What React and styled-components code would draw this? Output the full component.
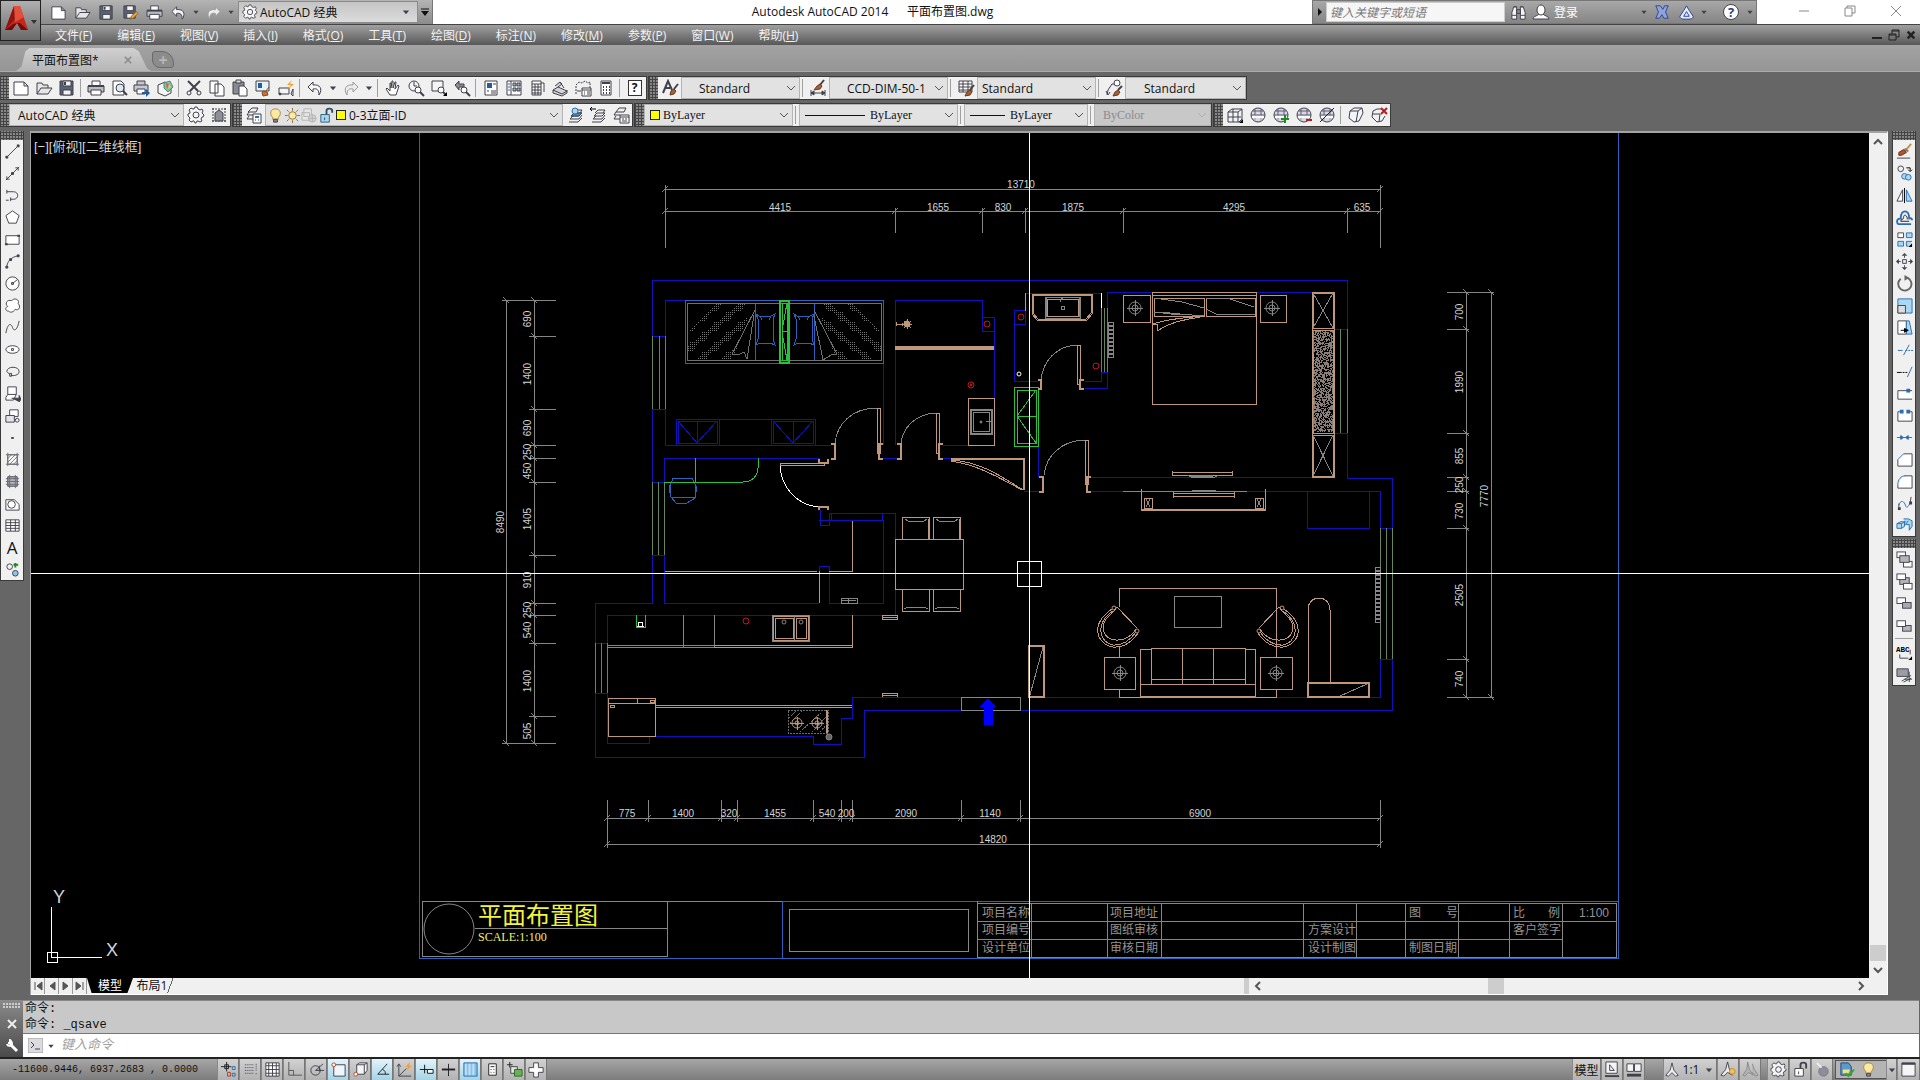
import React from 'react';
import styled, { createGlobalStyle, css } from 'styled-components';

const GlobalStyle = createGlobalStyle`
    * { box-sizing: border-box; }
    body {
        margin: 0;
        background: #666666;
        font-family: "Open Sans", "Noto Sans CJK SC", sans-serif;
        font-size: 12px;
        color: #111;
    }
    button, select, input {
        font: inherit;
        color: inherit;
        margin: 0;
        padding: 0;
        border: 0;
        border-radius: 0;
        background: none;
        outline: none;
    }
    h1 { margin: 0; font-size: 12px; font-weight: 400; }
`;

/* ---------- icons ---------- */

const Glyph = styled.svg`
    display: block;
    flex: none;
    fill: none;
    stroke: #41414b;
    stroke-width: 1;
`;

const BLUE = '#2a6db0';
const SKY = '#a9d8f2';

const boxes = (a, b, fillA, fillB) => (
    <>
        <rect x={a[0]} y={a[1]} width="9" height="6" fill={fillA} />
        <rect x={b[0]} y={b[1]} width="9" height="6" fill={fillB} />
    </>
);

const globe = (
    <>
        <circle cx="9" cy="9" r="7" fill="#d8d8e0" />
        <path d="M2 9h14M4 5h10M6 3v6M12 3v6" stroke="#5c5c78" />
        <path d="M3 10h12v2H3z" fill="#fff" stroke="none" />
        <path d="M6 12v3M12 12v3" stroke="#9a9aac" />
    </>
);

const sheets = (
    <path d="M5 10l3-3h8l-3 3zM4 13l3-3M4 13h9l3-4M3 16h9l4-4M6 7l3-3h7l-2 3" fill="none" />
);

const icons = {
    page: <path d="M2 3h10l4 4v9H2zM12 3v4h4" fill="#fff" />,
    open: <path d="M2 15V4h5l1 2h5v3M2 15l4-6h11l-4 6z" fill="#e6e6e6" />,
    save: (
        <>
            <path d="M2 2h13v14H2z" fill="#5a6274" />
            <path d="M5 2h8v5H5zM5 11h8v5H5z" fill="#f2f2f2" />
            <path d="M6 3h2v3H6z" fill="#41414b" stroke="none" />
        </>
    ),
    saveAs: (
        <>
            <path d="M2 2h12v13H2z" fill="#5a6274" />
            <path d="M5 2h7v5H5zM5 10h7v5H5z" fill="#f2f2f2" />
            <path d="M9 16l1-3 5-5 2 2-5 5z" fill="#e9a83a" stroke="#8a5c1c" />
        </>
    ),
    print: (
        <>
            <path d="M5 7V2h8v5" fill="#fff" />
            <path d="M1 7h16v6H1z" fill="#b8bcc4" />
            <path d="M4 11h10v5H4z" fill="#fff" />
            <path d="M1 7h16" strokeWidth="2" />
        </>
    ),
    preview: (
        <>
            <path d="M3 2h8l3 3v11H3z" fill="#fff" />
            <circle cx="10" cy="9" r="4" fill="#dfe9f4" />
            <path d="M13 12l4 4" strokeWidth="2" />
        </>
    ),
    publish: (
        <>
            <path d="M4 6V2h8v4M1 6h14v6H1z" fill="#c5c8d0" />
            <path d="M4 10h8v5H4z" fill="#fff" />
            <path d="M9 13h4v-3l4 4-4 4v-3H9z" fill="#1f5da0" stroke="none" />
        </>
    ),
    cube: (
        <>
            <path d="M2 6l7-3 6 3v8l-6 3-7-3z" fill="#f4f4f4" />
            <path d="M8 4l6-2 3 6-5 5-4-4z" fill="#7cc4a8" stroke="#4a8a80" />
            <path d="M10 4l3 1-2 5z" fill="#e05a3a" stroke="none" />
            <path d="M13 5l2 3-3 2z" fill="#f0c648" stroke="none" />
        </>
    ),
    cut: (
        <>
            <path d="M3 2l10 10M15 2L5 12" strokeWidth="2" />
            <circle cx="4" cy="14" r="2" />
            <circle cx="14" cy="14" r="2" />
        </>
    ),
    copy: <path d="M2 2h8v12H2zM7 5h6l3 3v9H7z" fill="#fff" />,
    paste: (
        <>
            <path d="M2 3h11v12H2z" fill="#8a8a92" />
            <path d="M8 7h5l3 3v7H8z" fill="#fff" />
            <path d="M5 1h5v3H5z" fill="#ddd" />
        </>
    ),
    match: (
        <>
            <path d="M2 2h13v10H2z" fill="#e8f0f8" />
            <path d="M4 4h4v5H4z" fill="#1f5da0" stroke="none" />
            <path d="M15 8l-3 4M9 12l4 1 1 3-5 1-1-3z" fill="#c8733a" stroke="#8a4a1c" />
        </>
    ),
    blockEdit: (
        <>
            <path d="M2 9h10v6H2z" fill="#f4f4f4" />
            <path d="M15 1l-5 5h4l-4 5 7-6h-4z" fill="#f0a030" stroke="none" />
            <path d="M14 15l2-5v7z" fill="#fff" />
            <circle cx="3" cy="15" r="1" fill="#41414b" />
        </>
    ),
    undo: <path d="M7 3L2 8l5 5v-3c4-1 6 1 6 6 4-6 1-11-6-10z" fill="#f7f7f7" />,
    redo: <path d="M11 3l5 5-5 5v-3c-4-1-6 1-6 6-4-6-1-11 6-10z" fill="#ececec" stroke="#9a9a9a" />,
    pan: <path d="M6 16L2 10l1-1 3 3V4h1v5l1-7h1v7l2-6h1l-1 7 3-4 1 1-3 9z" fill="#fff" />,
    zoomRt: (
        <>
            <circle cx="7" cy="7" r="5" fill="#f4f4f4" />
            <path d="M7 3v4h3" stroke="#41414b" />
            <circle cx="11" cy="11" r="3" fill="#fff" />
            <path d="M13 13l4 4" strokeWidth="2" />
        </>
    ),
    zoomWin: (
        <>
            <path d="M2 2h11v10H2z" fill="#f4f4f4" />
            <circle cx="11" cy="11" r="3" fill="#fff" />
            <path d="M13 13l3 3" strokeWidth="2" />
            <path d="M17 13v4h-4z" fill="#000" stroke="none" />
        </>
    ),
    zoomPrev: (
        <>
            <path d="M2 6l4-4v3h5v3H6v3z" fill="#8a8a92" />
            <circle cx="11" cy="11" r="3" fill="#fff" />
            <path d="M13 13l4 4" strokeWidth="2" />
        </>
    ),
    props: (
        <>
            <path d="M3 2h12v14H3z" fill="#fff" />
            <path d="M5 4h5v5H5z" fill="#1f5da0" stroke="none" />
            <path d="M11 5h3M5 12h2M9 12h5M9 14h5" />
        </>
    ),
    design: (
        <>
            <path d="M2 2h14v14H2zM6 2v14" fill="#fff" />
            <path d="M8 4h3v3H8zM12 4h3v3h-3zM8 9h3v3H8zM12 9h3v3h-3z" fill="#9fb4cc" />
            <path d="M3 5h2M3 8h2M3 11h2" stroke={BLUE} />
        </>
    ),
    palettes: <path d="M4 2h9v14H4zM4 5h9M7 5v11M10 5v11M4 8h9M4 11h9M4 14h9M13 4h3v9" fill="#fff" />,
    sheetSet: <path d="M2 11l9 4 5-3-9-4zM2 11v3l9 3 5-3v-3M4 7l5-4 2 2-4 3M9 3l4 6" fill="#d4d4da" />,
    markup: (
        <>
            <path d="M2 15V6l3-3 3 1 3-2 3 2 2-1v6" strokeDasharray="2 1" />
            <path d="M8 9h9v8H8zM8 11h9" fill="#fff" />
            <path d="M10 13h1M13 13h3M10 15h1M13 15h3M3 12h4" />
        </>
    ),
    calc: (
        <>
            <path d="M4 2h10v14H4z" fill="#fff" />
            <path d="M5 4h8" strokeWidth="2" />
            <path d="M6 8h1M9 8h1M12 8h1M6 11h1M9 11h1M12 11h1M6 14h1M9 14h1M12 14h1" strokeWidth="2" />
        </>
    ),
    textStyle: (
        <>
            <path d="M2 14L7 2l4 9M4 9h5" strokeWidth="2" />
            <path d="M17 5l-4 5" strokeWidth="2" />
            <path d="M9 16l1-4 3-2 2 2-2 3z" fill="#a8603a" stroke="#6a3a1c" />
        </>
    ),
    dimStyle: (
        <>
            <path d="M2 11v6M16 11v6M2 14h14M2 14l3-2v4zM16 14l-3-2v4z" fill="#41414b" />
            <path d="M15 1l-4 5" strokeWidth="2" />
            <path d="M5 11l3-4 3-2 2 2-2 3z" fill="#a8603a" stroke="#6a3a1c" />
        </>
    ),
    tableStyle: (
        <>
            <path d="M2 2h13v11H2zM2 5h13M2 8h13M2 11h13M6 2v11M11 2v11" fill="#fff" />
            <path d="M17 6l-4 5" strokeWidth="2" />
            <path d="M8 17l2-4 3-2 2 2-2 3z" fill="#a8603a" stroke="#6a3a1c" />
        </>
    ),
    leaderStyle: (
        <>
            <path d="M2 16l1-5 4-6h3" />
            <path d="M1 12l2 4 2-3" />
            <circle cx="12" cy="4" r="3" fill="#fff" />
            <path d="M17 7l-4 4" strokeWidth="2" />
            <path d="M8 17l2-4 3-2 2 2-2 3z" fill="#a8603a" stroke="#6a3a1c" />
        </>
    ),
    gear: (
        <>
            <path d="M8 1h2l1 2 2 1 2-1 1 2-1 2 1 1 1 1-1 2-1 0-1 2 1 2-2 1-2-1-1 0-1 2H8l-1-2-1 0-2 1-2-2 1-2-1-1-1-1V8l2-1 0-1-1-2 2-2 2 1 1 0z" fill="#f4f4f4" />
            <circle cx="9" cy="9" r="3" />
        </>
    ),
    workspace: (
        <>
            <path d="M2 3h14M2 15h14M3 2v14M15 2v14" strokeDasharray="2 1" />
            <path d="M5 7l4-3 4 3v8H5z" fill="#8e8e96" />
        </>
    ),
    layerMgr: (
        <>
            <path d="M3 6l4-4h6l-2 4zM2 9h6M2 9l2-3M2 13h6M2 13l2-3" />
            <path d="M8 8h8v9H8z" fill="#fff" />
            <path d="M10 10h4v2h-4z" fill={BLUE} stroke="none" />
            <path d="M10 14h1M13 14h1" />
        </>
    ),
    layerCurrent: (
        <>
            {sheets}
            <path d="M5 10l3-3h8l-3 3z" fill="#3f8fd0" />
            <circle cx="9" cy="5" r="3" fill={SKY} stroke={BLUE} />
        </>
    ),
    layerPrev: <>{sheets}<path d="M1 3h6M1 3l2-2M1 3l2 2" stroke="#000" /></>,
    layerState: (
        <>
            <path d="M4 6l3-4h7l-2 4zM2 9h6M2 9l2-3M2 13h6M2 13l2-3" />
            <path d="M8 9h9v8H8zM8 11h9M10 13h2M13 13h2M10 15h5" fill="#fff" />
        </>
    ),
    bulb: (
        <>
            <path d="M6 11c-4-4-2-9 3-9s7 5 3 9v2H6z" fill="#ffe9a0" stroke="#a08a4a" />
            <path d="M7 13h4v3H7z" fill="#8a8a8a" />
        </>
    ),
    sun: (
        <>
            <circle cx="9" cy="9" r="4" fill="#ffe9a8" stroke="#8a7434" />
            <path d="M9 1v3M9 14v3M1 9h3M14 9h3M3 3l2 2M15 3l-2 2M3 15l2-2M15 15l-2-2" stroke="#8a7434" />
        </>
    ),
    freeze: (
        <g stroke="#b4b4b4">
            <path d="M3 2h8v8H3zM1 6h8v8H1z" fill="#e6e6e6" />
            <circle cx="12" cy="12" r="4" fill="#d2d2d2" />
            <path d="M12 8v8M8 12h8" />
        </g>
    ),
    unlock: (
        <>
            <path d="M9 8V4c0-3 6-3 6 0v2" strokeWidth="2" stroke="#2d4f66" />
            <path d="M3 8h9v8H3z" fill={SKY} stroke="#2d5f7c" />
            <path d="M7 11v3" />
        </>
    ),
    viewport: (
        <>
            <path d="M2 6l4-3h10v10l-3 3H2zM2 6h10v10M12 6l4-3M7 3v13M2 11h13" fill="#f2f2f6" />
            <path d="M17 13v4h-4z" fill="#000" stroke="none" />
        </>
    ),
    globe,
    globeAdd: <>{globe}<path d="M13 9v8M9 13h8" stroke="#1c8a1c" strokeWidth="2" /></>,
    globeSub: <>{globe}<path d="M11 14h6" stroke="#b02020" strokeWidth="2" /></>,
    globeOff: <>{globe}<path d="M2 16L16 2" stroke="#222" /></>,
    solid: <path d="M3 5l4-3h8l1 5-4 8-5 1-5-4zM3 5h8l4-3M11 5l-2 11" fill="#f2f6fa" />,
    solidOff: (
        <>
            <path d="M3 5l4-2h4M3 5l-1 6 5 5 5-1 3-5M3 8h7l-1 8" fill="#f2f6fa" />
            <path d="M11 2l6 6M17 2l-6 6" stroke="#b02020" strokeWidth="2" />
        </>
    ),

    line: <><path d="M3 15L15 3" /><path d="M2 14h2v2H2zM14 2h2v2h-2z" fill="#41414b" /></>,
    xline: <><path d="M2 16L16 2M3 12v3h3M12 3h3v3" /><path d="M8 8h2v2H8z" fill="#41414b" /></>,
    pline: <path d="M3 5h7c6 0 6 8 0 8H7M3 3v4M7 11v4M2 14h3" />,
    polygon: <path d="M9 2l7 5-3 8H5L2 7z" fill="#fff" />,
    rect: <><path d="M2 5h14v9H2z" fill="#fff" /><path d="M1 13h3v2H1zM14 4h3v2h-3z" fill="#41414b" stroke="none" /></>,
    arc: <><path d="M3 15c0-6 5-11 12-12" /><path d="M2 14h2v2H2zM14 2h2v2h-2zM6 6h2v2H6z" fill="#41414b" /></>,
    circle: <><circle cx="9" cy="9" r="7" fill="#fff" /><path d="M9 9l5-4M8 8h2v2H8z" /></>,
    cloud: <path d="M5 15c-4 0-4-4-1-5-4-3 0-8 4-6 3-4 9-1 7 3 3 3 1 8-3 6-2 3-5 4-7 2z" fill="#fff" />,
    spline: <path d="M2 15c2-12 6-10 7-6s5 4 7-7" />,
    ellipse: <><ellipse cx="9" cy="9" rx="7" ry="4" fill="#fff" /><path d="M8 8h2v2H8z" /></>,
    ellipseArc: <path d="M3 9c0-6 13-6 13 0 0 4-6 5-9 4M3 9l3 3M6 11h2v3H6z" />,
    insert: <><path d="M4 2h9v8H4zM4 10l-2 3v3h8l3-6" fill="#fff" /><path d="M8 14h8v-3l2 4-2 3" fill="#41414b" /></>,
    makeBlock: <><path d="M6 3h9v7H6z" fill="#fff" /><path d="M2 9h9v7H2z" fill="#e4e4ea" /><circle cx="14" cy="14" r="2" /></>,
    point: <path d="M8 9h2v1H8z" fill="#41414b" />,
    hatch: <path d="M4 4h10v10H4zM4 8l4-4M4 12l8-8M6 14l8-8M10 14l4-4M2 4h14M2 14h14M4 2v14M14 2v14" stroke="#6a6a74" fill="#fff" />,
    gradient: <><path d="M4 4h10v10H4z" fill="#b4b4bc" /><path d="M2 6h14M2 9h14M2 12h14M6 2v14M12 2v14" stroke="#6a6a74" /></>,
    region: <><path d="M2 5h9l5 5v6H2z" fill="#fff" /><circle cx="8" cy="10" r="4" /></>,
    table: <path d="M2 3h14v12H2zM2 6h14M2 9h14M2 12h14M7 3v12M12 3v12" fill="#fff" />,
    addSel: <><circle cx="6" cy="6" r="3" /><path d="M12 2v5M10 4h5" stroke="#1c8a1c" strokeWidth="2" /><circle cx="12" cy="13" r="3" fill="#8fc4ea" /></>,

    erase: <><path d="M16 1l-6 7" stroke="#c89040" strokeWidth="2" /><path d="M9 6l4 3" stroke="#777" strokeWidth="2" /><path d="M3 10l5-3 3 3-5 3H3z" fill="#c0502c" stroke="#5a2a1c" /><path d="M1 16h14" /></>,
    copyObj: <><circle cx="5" cy="4" r="3" /><path d="M11 3h4v3M13 5l2 2 2-2" stroke="#000" /><circle cx="9" cy="12" r="3" fill={SKY} stroke={BLUE} /><circle cx="13" cy="13" r="3" fill={SKY} stroke={BLUE} /></>,
    mirror: <><path d="M7 3v12H1z" fill="#fff" /><path d="M9 1v16" stroke="#000" /><path d="M11 3v12h6z" fill={SKY} stroke={BLUE} /></>,
    offset: <><path d="M2 16h14M2 16c-2-4 0-6 3-6 0-10 9-10 9 0 3-1 3 2 3 2" stroke={BLUE} strokeWidth="2" /><path d="M5 13h9M5 13c0-3 3-1 3-4 0-4 4-3 4 2" stroke="#222" /></>,
    array: <><path d="M2 2h6v5H2z" fill="#fff" /><path d="M11 2h6v5h-6zM2 11h6v5H2zM17 11h-6v5h2" fill={SKY} stroke={BLUE} /><path d="M17 13v4h-4z" fill="#000" stroke="none" /></>,
    move: <><path d="M9 3v2M9 13v2M2 9h3M13 9h3M7 7h4v4H7z" /><path d="M9 0l3 3H6zM9 18l3-3H6zM0 9l3-3v6zM18 9l-3-3v6z" fill="#41414b" stroke="none" /></>,
    rotate: <><path d="M5 4a7 7 0 1 0 7-1" stroke="#666" strokeWidth="2" /><path d="M9 0l5 3-5 3z" fill="#666" stroke="none" /></>,
    scale: <><path d="M2 2h15v15H2z" fill={SKY} stroke={BLUE} /><path d="M2 9h8v8H2z" fill="#ddd" /></>,
    stretch: <><path d="M2 2h9v14H2z" fill="#fff" /><path d="M11 2h3l3 14h-6z" fill={SKY} stroke={BLUE} /><path d="M5 12h6M9 10l4 2-4 2z" fill="#000" stroke="#000" /></>,
    trim: <><path d="M2 10h5M14 4l-6 11" stroke={BLUE} /><path d="M10 10h8" stroke={BLUE} strokeDasharray="2 1" /></>,
    extend: <><path d="M1 10h5" stroke="#000" /><path d="M7 10h5" stroke="#000" strokeDasharray="2 1" /><path d="M17 4l-5 11" stroke={BLUE} /></>,
    breakPt: <><path d="M17 6H2v9h15" fill="#fff" /><path d="M11 4h4v4h-4z" fill={BLUE} stroke="none" /></>,
    breakObj: <><path d="M4 5H2v10h15V5h-2" fill="#fff" /><path d="M4 3h4v4H4zM11 3h4v4h-4z" fill={BLUE} stroke="none" /></>,
    join: <path d="M1 9h16M5 7l3 2-3 2zM13 7l-3 2 3 2z" fill={BLUE} stroke={BLUE} />,
    chamfer: <><path d="M8 3h9v13H2V9" fill="#fff" /><path d="M2 9l6-6" stroke={BLUE} /></>,
    fillet: <><path d="M9 3h8v13H2v-4" fill="#fff" /><path d="M2 12c0-5 3-9 8-9" stroke={BLUE} /></>,
    blend: <><path d="M3 16V9M15 8l1-6" /><path d="M3 11c2-7 6-4 7 0s4 1 5-4" stroke={BLUE} /><path d="M2 13h3v3H2zM14 7h3v3h-3z" fill="#41414b" stroke="none" /></>,
    explode: <path d="M1 7l4-2h5l-4 2zM1 7v5h5V7M6 12l3-2V5M8 2h5l4 2v6l-3 4V8h-4M10 8l3-4" fill={SKY} stroke={BLUE} />,
    front: <>{boxes([1, 1], [8, 11], '#fff', '#fff')}<rect x="4" y="5" width="10" height="7" fill="#b4b4bc" /></>,
    back: <><rect x="4" y="5" width="10" height="7" fill="#b4b4bc" />{boxes([1, 1], [8, 11], '#fff', '#fff')}</>,
    above: boxes([1, 3], [7, 8], '#fff', '#a8a8b0'),
    under: boxes([7, 9], [1, 4], '#b4b4bc', '#fff'),
    annoFront: (
        <>
            <text x="0" y="8" fontSize="8" fontWeight="700" fontFamily="Liberation Mono, monospace" fill="#000" stroke="none">ABC</text>
            <path d="M4 11v4h9M15 6v5" />
            <path d="M17 13v4h-4z" fill="#000" stroke="none" />
        </>
    ),
    hatchBack: <><path d="M1 3h12v8H1z" fill="#9c9ca4" /><path d="M6 16l10-6M8 17l8-4M14 6v11M9 14h8" /></>,

    binoculars: (
        <>
            <path d="M2 9l2-6h3v13H2zM16 9l-2-6h-3v13h5z" fill="#f4f4f4" />
            <path d="M7 6h4v4H7z" fill="#888" />
            <path d="M4 3h3M11 3h3M2 12h5M11 12h5" />
        </>
    ),
    person: (
        <>
            <path d="M1 16c0-3 5-3 6-5h4c1 2 6 2 6 5z" fill="#fff" />
            <ellipse cx="9" cy="7" rx="4" ry="5" fill="#fff" />
        </>
    ),
    exchange: <path d="M2 2h5l3 4 2-4h4l-3 7 3 7h-5l-2-4-3 4H2l3-7z" fill="#8ea2e0" stroke="#27408c" />,
    a360: <path d="M9 2l3 5 4 6c0 3-3 3-7 3s-7 0-7-3l4-6zM9 8l3 5H6z" fill="#e4ebff" stroke="#27408c" />,

    infer: <><path d="M7 1v10M1 6h11M5 4h4v4H5z" stroke="#222" /><path d="M13 6h3v3h-3zM13 13h3v3h-3z" stroke={BLUE} /><path d="M8 12h3v4H8z" stroke="#b04020" /></>,
    snap: <path d="M3 4h10M3 7h10M3 10h10M3 13h10M15 3v8M15 13v2" strokeDasharray="1 1" />,
    grid: <path d="M2 2h14v14H2zM5 2v14M9 2v14M13 2v14M2 5h14M2 9h14M2 13h14" fill="#fff" />,
    ortho: <path d="M3 1v14h14M3 10h5v5" stroke="#555" />,
    polar: <><circle cx="8" cy="10" r="5" /><path d="M8 10l8-7M8 10h9M12 5v6" /></>,
    osnap: <><path d="M4 4h12v12H4z" fill="#f0f5fa" /><circle cx="4" cy="4" r="2" stroke="#c04020" fill="#fff" /></>,
    osnap3d: <><path d="M5 4l3-2h8v8l-3 4H5zM5 4h8v10M13 4l3-2" fill="#f5f5f5" /><circle cx="4" cy="14" r="2" stroke="#c04020" fill="#fff" /></>,
    otrack: <path d="M14 3L4 14h12M9 9c3 1 3 3 3 5" stroke="#222" />,
    ducs: <><path d="M3 4v12h13M3 16l8-8M1 6l2-3 2 3" /><path d="M15 1l-5 5h3l-2 4 6-5h-3z" fill="#f0a030" stroke="none" /></>,
    dyn: <><path d="M7 4v9M2 9h8" stroke="#111" /><path d="M10 9h6v4h-6z" fill="#fff" stroke="#111" /></>,
    lwt: <><path d="M9 3v13" stroke="#222" /><path d="M2 9h14" stroke="#222" strokeWidth="2" /></>,
    tpy: <><path d="M2 2h14v14H2z" fill="#8cc0e8" stroke={BLUE} /><path d="M3 6h12M3 10h12M3 14h12M4 3v12M8 3v12M12 3v12" stroke="#c2e0f6" strokeDasharray="2 2" strokeWidth="2" /></>,
    qp: (
        <>
            <path d="M5 3h8v12H5z" fill="#fff" stroke="#222" />
            <path d="M7 6h4M7 9h1M10 9h1M7 12h1M10 12h1" stroke="#222" />
        </>
    ),
    cycle: <><path d="M4 1v6M1 4h6" stroke="#222" /><path d="M5 6h7v7H5z" fill="#e4e4e4" /><path d="M9 9h8v7H9z" fill="#6cb054" stroke="#2c6a24" /></>,
    annoMon: <path d="M6 2h5v5h5v5h-5v5H6v-5H1V7h5z" fill="#fff" />,
    layoutA: <><path d="M2 1h12v12H2z" fill="#f5f5f5" /><path d="M6 4v6h5z" /><path d="M1 16h15" strokeWidth="2" /></>,
    layoutB: <><path d="M1 3h7v8H1zM9 3h7v8H9z" fill="#f5f5f5" /><path d="M1 15h15" strokeWidth="3" /></>,
    anno: <path d="M9 1l2 8 5 6-3 1-4-4-4 4-3-1 5-6z" fill="#eee" />,
    annoOn: <><path d="M8 1l2 8 3 6-5-3-4 4-3-1 5-6z" fill="#eee" /><circle cx="13" cy="11" r="3" fill="#f5c05a" stroke="#c88a20" /></>,
    annoAuto: <path d="M6 1l2 8 4 6-5-3-4 4-2-1 4-6zM11 3l2 6 4 6-3 1-3-4" fill="#b4b4b4" stroke="#8a8a8a" />,
    lock: <><path d="M9 8V4c0-3 6-3 6 0v4" strokeWidth="2" /><path d="M3 8h9v8H3z" fill="#fff" /><path d="M7 11v3" /></>,
    isolate: <><circle cx="10" cy="11" r="5" fill="#8e8e98" stroke="#77777f" /><path d="M3 2l5 5" stroke="#eee" strokeWidth="2" /></>,
    trayFile: <><path d="M2 2h8l3 4v9H2z" fill="#5a9ad0" stroke="#1c4a78" /><path d="M4 9h8l-2 4H4z" fill="#f5e070" stroke="none" /><path d="M7 13l3 3 6-7" stroke="#3fa030" strokeWidth="2" /></>,
    clean: <><path d="M2 2h14v14H2z" fill="#f5f5f5" /><path d="M2 3h14" strokeWidth="2" /></>,
    caret: <path d="M5 7h8l-4 5z" fill="#41414b" stroke="none" />,
};

function Icon({ name, size = 18 }) {
    return (
        <Glyph viewBox="0 0 18 18" width={size} height={size} aria-hidden="true">
            {icons[name]}
        </Glyph>
    );
}

/* ---------- shared parts ---------- */

const IconButton = styled.button`
    display: flex;
    align-items: center;
    justify-content: center;
    flex: none;
    width: ${({ $w = 23 }) => $w}px;
    height: 22px;
    font-size: 14px;
    font-weight: 700;
`;

const Divider = styled.span`
    flex: none;
    width: 2px;
    height: 18px;
    margin: 0 2px;
    border-left: 1px solid #a0a0a0;
    align-self: center;
`;

const Grip = styled.span`
    flex: none;
    width: 9px;
    background: radial-gradient(circle at 1px 1px, #888 1px, transparent 1px) 1px 3px / 3px 3px #444;
`;

const Toolbar = styled.div`
    display: flex;
    height: 24px;
    border: 1px solid #3a3a3a;
    border-left-width: ${({ $first }) => ($first ? 0 : 1)}px;
    background: #f0f0f0;
`;

const Combo = styled.div`
    display: flex;
    align-items: center;
    width: ${({ $w }) => $w}px;
    height: 22px;
    padding: 0 3px 0 ${({ $pad = 5 }) => $pad}px;
    gap: 3px;
    background: ${({ $off }) => ($off ? '#c8c8c8' : '#e2e2e2')};
    color: ${({ $off }) => ($off ? '#8a8a8a' : '#111')};
    border: 1px solid #b4b4b4;
    ${({ $serif }) => $serif && css`font-family: "Liberation Serif", serif;`}
`;

const Picker = styled.select`
    appearance: none;
    flex: 1;
    min-width: 0;
    height: 20px;
    opacity: 1;
`;

const Swatch = styled.span`
    width: 10px;
    height: 10px;
    background: #ffff00;
    border: 1px solid #222;
`;

const Stroke = styled.span`
    width: ${({ $w }) => $w}px;
    height: 1px;
    margin-right: 2px;
    background: #111;
`;

function Chevron({ dir = 'down', color = '#555', heavy }) {
    const paths = {
        down: 'M1 3l4 4 4-4',
        up: 'M1 7l4-4 4 4',
        left: 'M7 1L3 5l4 4',
        right: 'M3 1l4 4-4 4',
    };
    return (
        <Glyph viewBox="0 0 10 10" width="10" height="10" aria-hidden="true">
            <path d={paths[dir]} stroke={color} strokeWidth={heavy ? 2 : 1} />
        </Glyph>
    );
}

function Dropdown({ label, value, children, off, ...rest }) {
    return (
        <Combo $off={off} {...rest}>
            {children}
            <Picker aria-label={label} disabled={off} defaultValue={value}>
                <option>{value}</option>
            </Picker>
            <Chevron color={off ? '#b0b0b0' : '#555'} />
        </Combo>
    );
}

const Tools = ({ names }) =>
    names.map((name, i) => {
        if (name === '|') return <Divider key={i} />;
        if (name === 'v') return <IconButton key={i} $w={13} aria-label="历史"><Icon name="caret" size={14} /></IconButton>;
        return <IconButton key={i} aria-label={name}><Icon name={name} /></IconButton>;
    });

/* ---------- header ---------- */

const Page = styled.div`
    display: flex;
    flex-direction: column;
    min-height: 100vh;
`;

const Header = styled.header`
    display: grid;
    grid-template-columns: 41px 1fr;
    grid-template-rows: 24px 21px;
    background: linear-gradient(#a2a2a2, #9a9a9a 55%, #585858);
`;

const AppButton = styled.button`
    grid-row: 1 / 3;
    height: 41px;
    display: flex;
    align-items: center;
    justify-content: center;
    border: 1px solid #222;
    background: linear-gradient(#b0b0b0, #6a6a6a);
`;

const TitleBar = styled.div`
    display: flex;
    background: #fff;
`;

const Quick = styled.div`
    display: flex;
    align-items: center;
    width: 392px;
    padding-left: 5px;
    background: linear-gradient(#b4b4b4, #8c8c8c);
    border-right: 1px solid #777;

    ${IconButton} { height: 24px; }
`;

const WorkspaceBox = styled.div`
    display: flex;
    align-items: center;
    width: 180px;
    height: 22px;
    margin-left: auto;
    padding: 0 4px 0 3px;
    gap: 2px;
    background: linear-gradient(#c4c4c4, #dcdcdc);
    border: 1px solid #8a8a8a;
`;

const Title = styled.h1`
    flex: 1;
    line-height: 23px;
    text-align: center;
    white-space: pre;
`;

const InfoCenter = styled.div`
    display: flex;
    align-items: center;
    width: 445px;
    background: linear-gradient(#a8a8a8, #858585);
    border: 1px solid #777;
`;

const SearchBox = styled.input`
    width: 179px;
    height: 20px;
    padding-left: 3px;
    background: #f6f6f6;
    border: 1px solid #ccc;
    margin-right: 1px;

    &::placeholder { color: #777; font-style: italic; opacity: 1; }
`;

const LoginButton = styled.button`
    display: flex;
    align-items: center;
    gap: 4px;
    flex: 1;
    padding-left: 2px;
    color: #fff;
`;

const Spacer = styled.span`
    flex: 1;
`;

const HelpButton = styled(IconButton)`
    padding-left: 8px;
`;

const HelpBadge = styled.span`
    width: 16px;
    height: 16px;
    border: 1px solid #444;
    border-radius: 50%;
    background: #fff;
    color: #27408c;
    font-size: 13px;
    line-height: 14px;
`;

const WindowButtons = styled.div`
    display: flex;
    width: 163px;
    padding-left: 24px;
`;

const MenuBar = styled.nav`
    display: flex;
    align-items: center;
    gap: 25px;
    padding-left: 14px;
    border-top: 1px solid #444;
    background: linear-gradient(#a0a0a0, #585858);
    color: #f2f2f2;
`;

const MenuItem = styled.button`
    line-height: 19px;
    white-space: nowrap;
`;

const DocButtons = styled.div`
    display: flex;
    margin-left: auto;
    padding-right: 1px;
`;

const TabBar = styled.div`
    display: flex;
    align-items: flex-end;
    height: 27px;
    padding-left: 16px;
    background: linear-gradient(#a3a3a3, #959595);
    border-bottom: 1px solid #aaa;
`;

const FileTab = styled.div`
    display: flex;
    align-items: center;
    justify-content: space-between;
    width: 135px;
    height: 23px;
    padding: 0 19px 0 16px;
    background: linear-gradient(#d0d0d0, #b6b6b6);
    clip-path: polygon(0 100%, 4% 82%, 7% 14%, 10% 0, 87% 0, 91% 14%, 97% 88%, 100% 100%);
`;

const NewTab = styled.button`
    width: 22px;
    height: 17px;
    margin: 0 0 3px 1px;
    border: 1px solid #6a6a6a;
    border-radius: 3px 12px 3px 8px;
    background: #8c8c8c;
    color: #b8b8b8;
    font-size: 16px;
    font-weight: 700;
    line-height: 12px;
`;

const ToolArea = styled.div`
    display: flex;
    flex-direction: column;
    gap: 3px;
    padding: 4px 0;
    background: #666;
`;

const ToolRow = styled.div`
    display: flex;
    gap: 1px;
`;

const BoxedMark = styled.span`
    width: 14px;
    height: 16px;
    border: 1px solid #333;
    background: #fff;
    font-size: 12px;
    line-height: 14px;
`;

const LayerIcons = styled.span`
    display: flex;
    width: 66px;
    justify-content: space-between;
`;

const menus = [
    ['文件', 'F'], ['编辑', 'E'], ['视图', 'V'], ['插入', 'I'], ['格式', 'O'], ['工具', 'T'],
    ['绘图', 'D'], ['标注', 'N'], ['修改', 'M'], ['参数', 'P'], ['窗口', 'W'], ['帮助', 'H'],
];

function TopHeader() {
    return (
        <Header>
            <AppButton aria-label="应用程序菜单">
                <svg width="38" height="38" viewBox="0 0 38 38" aria-hidden="true">
                    <path d="M12 4h6l8 24h-7l-4-7-5 7H3z" fill="#c8281c" />
                    <path d="M12 4L3 28l11-12z" fill="#8e1410" />
                    <path d="M12 4h6l4 11-9 5z" fill="#e2503c" />
                    <path d="M3 28l8-6 4-1-5 7zM26 28l-8-7-3 0 4 7z" fill="#6e0e0c" />
                    <path d="M29 18h6l-3 4z" fill="#333" />
                </svg>
            </AppButton>
            <TitleBar>
                <Quick>
                    {['page', 'open', 'save', 'saveAs', 'print', 'undo'].map((n) => (
                        <IconButton key={n} $w={24} aria-label={n}><Icon name={n} size={17} /></IconButton>
                    ))}
                    <IconButton $w={11} aria-label="撤销历史"><Icon name="caret" size={12} /></IconButton>
                    <IconButton $w={24} aria-label="重做"><Icon name="redo" size={17} /></IconButton>
                    <IconButton $w={12} aria-label="重做历史"><Icon name="caret" size={12} /></IconButton>
                    <WorkspaceBox>
                        <Icon name="gear" size={16} />
                        <Picker aria-label="工作空间" defaultValue="AutoCAD 经典">
                            <option>AutoCAD 经典</option>
                        </Picker>
                        <Icon name="caret" size={14} />
                    </WorkspaceBox>
                    <IconButton $w={14} aria-label="自定义快速访问工具栏">
                        <Glyph viewBox="0 0 10 10" width="10" height="10"><path d="M1 2h8" stroke="#111" /><path d="M1 4h8L5 9z" fill="#111" stroke="none" /></Glyph>
                    </IconButton>
                </Quick>
                <Title>{'Autodesk AutoCAD 2014      平面布置图.dwg'}</Title>
                <InfoCenter>
                    <IconButton $w={13} aria-label="展开">
                        <Glyph viewBox="0 0 8 8" width="8" height="8"><path d="M2 0l4 4-4 4z" fill="#111" stroke="none" /></Glyph>
                    </IconButton>
                    <SearchBox type="text" aria-label="搜索" placeholder="键入关键字或短语" />
                    <IconButton $w={24} aria-label="搜索"><Icon name="binoculars" size={17} /></IconButton>
                    <LoginButton>
                        <Icon name="person" />
                        登录
                        <Spacer />
                        <Icon name="caret" size={12} />
                    </LoginButton>
                    <IconButton $w={24} aria-label="Exchange"><Icon name="exchange" size={16} /></IconButton>
                    <IconButton $w={24} aria-label="Autodesk 360"><Icon name="a360" size={17} /></IconButton>
                    <IconButton $w={12} aria-label="更多"><Icon name="caret" size={12} /></IconButton>
                    <HelpButton $w={34} aria-label="帮助">
                        <HelpBadge>?</HelpBadge>
                    </HelpButton>
                    <Icon name="caret" size={12} />
                </InfoCenter>
                <WindowButtons>
                    <IconButton $w={46} aria-label="最小化">
                        <Glyph viewBox="0 0 12 12" width="12" height="12"><path d="M1 6h10" stroke="#888" /></Glyph>
                    </IconButton>
                    <IconButton $w={46} aria-label="还原">
                        <Glyph viewBox="0 0 12 12" width="12" height="12"><path d="M1 3h7v8H1zM3 3V1h8v7H8" stroke="#888" /></Glyph>
                    </IconButton>
                    <IconButton $w={46} aria-label="关闭">
                        <Glyph viewBox="0 0 12 12" width="12" height="12"><path d="M1 1l10 10M11 1L1 11" stroke="#888" /></Glyph>
                    </IconButton>
                </WindowButtons>
            </TitleBar>
            <MenuBar>
                {menus.map(([text, key]) => (
                    <MenuItem key={key}>{text}(<u>{key}</u>)</MenuItem>
                ))}
                <DocButtons>
                    <IconButton $w={17} aria-label="最小化文档">
                        <Glyph viewBox="0 0 12 12" width="12" height="12"><path d="M1 9h10" stroke="#222" strokeWidth="2" /></Glyph>
                    </IconButton>
                    <IconButton $w={17} aria-label="还原文档">
                        <Glyph viewBox="0 0 12 12" width="12" height="12"><path d="M1 5h7v6H1zM4 5V1h7v7H8M4 2h7M1 6h7" stroke="#222" /></Glyph>
                    </IconButton>
                    <IconButton $w={17} aria-label="关闭文档">
                        <Glyph viewBox="0 0 12 12" width="10" height="10"><path d="M2 2l8 8M10 2l-8 8" stroke="#222" strokeWidth="3" /></Glyph>
                    </IconButton>
                </DocButtons>
            </MenuBar>
        </Header>
    );
}

function Toolbars() {
    return (
        <ToolArea>
            <ToolRow>
                <Toolbar $first>
                    <Grip />
                    <Tools names={['page', 'open', 'save', '|', 'print', 'preview', 'publish', 'cube', '|', 'cut', 'copy', 'paste', 'match', 'blockEdit', '|', 'undo', 'v', 'redo', 'v', '|', 'pan', 'zoomRt', 'zoomWin', 'zoomPrev', '|', 'props', 'design', 'palettes', 'sheetSet', 'markup', 'calc', '|']} />
                    <IconButton aria-label="帮助"><BoxedMark>?</BoxedMark></IconButton>
                </Toolbar>
                <Toolbar>
                    <Grip />
                    <IconButton aria-label="文字样式"><Icon name="textStyle" /></IconButton>
                    <Dropdown label="文字样式" value="Standard" $w={119} $pad={17} />
                    <Divider />
                    <IconButton aria-label="标注样式"><Icon name="dimStyle" /></IconButton>
                    <Dropdown label="标注样式" value="CCD-DIM-50-1" $w={119} $pad={17} />
                    <Divider />
                    <IconButton aria-label="表格样式"><Icon name="tableStyle" /></IconButton>
                    <Dropdown label="表格样式" value="Standard" $w={119} $pad={4} />
                    <Divider />
                    <IconButton aria-label="多重引线样式"><Icon name="leaderStyle" /></IconButton>
                    <Dropdown label="多重引线样式" value="Standard" $w={121} $pad={18} />
                </Toolbar>
            </ToolRow>
            <ToolRow>
                <Toolbar $first>
                    <Grip />
                    <Dropdown label="工作空间" value="AutoCAD 经典" $w={175} $pad={8} />
                    <Tools names={['gear', 'workspace']} />
                </Toolbar>
                <Toolbar>
                    <Grip />
                    <IconButton aria-label="图层特性管理器"><Icon name="layerMgr" /></IconButton>
                    <Combo $w={298} $pad={1}>
                        <LayerIcons>
                            {['bulb', 'sun', 'freeze', 'unlock'].map((n) => <Icon key={n} name={n} size={17} />)}
                        </LayerIcons>
                        <Swatch />
                        <Picker aria-label="图层" defaultValue="0-3立面-ID">
                            <option>0-3立面-ID</option>
                        </Picker>
                        <Chevron />
                    </Combo>
                    <Tools names={['layerCurrent', 'layerPrev', 'layerState']} />
                </Toolbar>
                <Toolbar>
                    <Grip />
                    <Dropdown label="颜色" value="ByLayer" $w={149} $serif><Swatch /></Dropdown>
                    <Divider />
                    <Dropdown label="线型" value="ByLayer" $w={159} $serif><Stroke $w={60} /></Dropdown>
                    <Divider />
                    <Dropdown label="线宽" value="ByLayer" $w={124} $serif><Stroke $w={35} /></Dropdown>
                    <Divider />
                    <Dropdown label="打印样式" value="ByColor" off $w={117} $pad={8} $serif />
                </Toolbar>
                <Toolbar>
                    <Grip />
                    <Tools names={['viewport', 'globe', 'globeAdd', 'globeSub', 'globeOff', '|', 'solid', 'solidOff']} />
                </Toolbar>
            </ToolRow>
        </ToolArea>
    );
}

/* ---------- drawing ---------- */

const INK = { wall: '#1010bc', tan: '#bf987b', gray: '#868686', green: '#28c03c', blue: '#2a62c0', pane: '#66845e', red: '#c01820' };

const Sheet = styled.svg`
    display: block;
    width: 100%;
    height: 100%;
    min-height: 0;
    background: #000;
    fill: none;
    shape-rendering: crispEdges;
    cursor: crosshair;

    circle { shape-rendering: geometricPrecision; }
    text { stroke: none; fill: #d4d4d4; font-family: "Liberation Sans", "Noto Sans CJK SC", sans-serif; }
`;

const topTicks = [665, 895, 982, 1025, 1123, 1347, 1380];
const topDims = [[780, '4415'], [938, '1655'], [1003, '830'], [1073, '1875'], [1234, '4295'], [1362, '635']];
const bottomTicks = [607, 648, 721, 737, 813, 841, 852, 961, 1020, 1380];
const bottomDims = [[627, '775'], [683, '1400'], [729, '320'], [775, '1455'], [827, '540'], [846, '200'], [906, '2090'], [990, '1140'], [1200, '6900']];
const leftTicks = [300, 336, 409, 445, 458, 482, 555, 603, 615, 643, 716, 743];
const leftDims = [[319, '690'], [374, '1400'], [428, '690'], [452, '250'], [471, '450'], [519, '1405'], [580, '910'], [610, '250'], [630, '540'], [681, '1400'], [731, '505']];
const rightTicks = [292, 329, 433, 477, 491, 528, 659, 697];
const rightDims = [[312, '700'], [382, '1990'], [456, '855'], [485, '250'], [511, '730'], [595, '2505'], [679, '740']];

const slash = (x, y) => `M${x - 3} ${y + 3}l6-6`;
const backslash = (x, y) => `M${x - 3} ${y - 3}l6 6`;

function Dimensions() {
    const v = (x, y, t) => (
        <text key={`${x}-${y}`} transform={`translate(${x} ${y}) rotate(-90)`} y="4" textAnchor="middle">{t}</text>
    );
    const h = (x, y, t) => <text key={`${x}-${y}`} x={x} y={y + 4} textAnchor="middle">{t}</text>;
    return (
        <g stroke={INK.gray} fontSize="10">
            <path d="M665 189H1380M665 211H1380M607 818H1380M607 844H1380M506 300V743M534 300V743M1466 292V697M1491 292V697" />
            <path d={topTicks.map((x) => `M${x} 208V233${slash(x, 211)}`).join('')} />
            <path d={`M665 185V248M1380 185V248M607 800V848M1380 800V848${slash(665, 189)}${slash(1380, 189)}${slash(607, 844)}${slash(1380, 844)}`} />
            <path d={bottomTicks.map((x) => `M${x} 800V822${slash(x, 818)}`).join('')} />
            <path d={leftTicks.map((y) => `M529 ${y}H556${backslash(534, y)}`).join('')} />
            <path d={rightTicks.map((y) => `M1447 ${y}H1469${backslash(1466, y)}`).join('')} />
            <path d={`M502 300H530M502 743H530M1466 292H1494M1466 697H1494${backslash(506, 300)}${backslash(506, 743)}${backslash(1491, 292)}${backslash(1491, 697)}`} />
            {h(1021, 184, '13710')}
            {topDims.map(([x, t]) => h(x, 207, t))}
            {bottomDims.map(([x, t]) => h(x, 813, t))}
            {h(993, 839, '14820')}
            {v(500, 522, '8490')}
            {leftDims.map(([y, t]) => v(527, y, t))}
            {rightDims.map(([y, t]) => v(1459, y, t))}
            {v(1484, 496, '7770')}
        </g>
    );
}

function Walls() {
    return (
        <>
            <g stroke={INK.wall}>
                <path d="M652 336V280H1347V329M1347 433V478H1392V528M1392 659V710H1021M961 710H864V757H595V693M595 643V603H652V555M652 482V409" />
                <path d="M665 336V300H883V445M665 409V445H831M664 482V458H820M652 336h13M652 409h13M652 482h12M652 555h12" />
                <path d="M895 445V300H982V331H994M982 317H994V398M883 458H898M943 445H968M943 458H951" />
                <path d="M1038 381H1014V310H1025V324H1014M1025 293H1101M1101 372V381H1085M1107 308V292H1312M1107 372V388H1085M1101 372h7" />
                <path d="M1335 329H1347M1335 433H1347M1038 446V477M1024 491H1040M1090 477H1312M1090 491H1123M1247 491H1380V528H1392M1392 659H1380V697H1045" />
                <path d="M1307 491V528H1369V491M961 697H852V718H841V744H813V736H649V743H607V693H595M595 643H607V615H895V589M895 539V513H829M820 510V525H829V513M829 520H883V603H829V566H819V571" />
                <path d="M819 603H664V555M819 520h10M831 513v7M882 513v7" />
                <path d="M676 445V419H815V445M678 443V421H717V443zM719 419V445M697 421V443M679 422L697 443L716 422M771 419V445M773 443V421H813V443zM793 421V443M774 422L793 443L812 422" />
            </g>
            <path stroke={INK.pane} d="M652 336V409M659 336V409M665 336V409M652 482V555M658 482V555M664 482V555M595 643V693M601 643V693M607 643V693M1101 308V372M1104 308V372M1107 308V372M1340 329V433M1347 329V433M1380 528V659M1386 528V659M1392 528V659" />
        </>
    );
}

// sparse weave of the two single beds
const weave = (() => {
    let d = '';
    for (let y = 304; y < 359; y += 2) {
        for (let x = 688; x < 752; x += 2) {
            const band = (x + y * 1.2 + ((y * 7) % 5)) % 24;
            const sum = x - 688 + (y - 304);
            const edge = 752 - (y - 304) * 0.35;
            if (band < 9 && sum > 26 && x < edge) d += `M${x} ${y}h1M${1568 - x} ${y}h1`;
        }
    }
    return d;
})();

// carpet speckle between the wardrobes
const speckle = (() => {
    let seed = 7;
    let d = '';
    for (let y = 331; y < 432; y += 1) {
        for (let x = 1313; x < 1333; x += 1) {
            seed = (seed * 1103515245 + 12345) % 2147483648;
            if (seed / 2147483648 > 0.4) d += `M${x} ${y}h1`;
        }
    }
    return d;
})();

const coil = (x, from, to) => {
    let d = '';
    for (let y = from; y < to; y += 4) d += `M${x} ${y}h5v3h-5z`;
    return d;
};

const Target = ({ x, y }) => (
    <g stroke={INK.gray}>
        <circle cx={x} cy={y} r="6" />
        <circle cx={x} cy={y} r="3" />
        <path d={`M${x - 8} ${y}h16M${x} ${y - 8}v16`} />
    </g>
);

const Armchair = () => (
    <>
        <path d="M1112 609C1090 624 1096 644 1113 647C1124 648 1133 641 1138 633M1113 611C1094 624 1100 643 1113 645C1124 646 1131 639 1136 632" />
        <path d="M1117 607L1137 628M1117 607C1112 615 1103 618 1103 628C1104 644 1128 644 1136 629" />
        <circle cx="1114" cy="608" r="2" />
        <circle cx="1137" cy="631" r="2" />
    </>
);

function Furniture() {
    return (
        <>
            <path stroke="#747474" d={weave} />
            <g stroke={INK.blue}>
                <path d="M685 300H883V363H685zM755 303V360M814 303V360" />
                <path d="M756 314l3 2h12l4-2-2 5v20l2 6-5-2h-10l-4 2 2-6v-20zM794 314l3 2h13l4-2-2 5v20l2 6-5-2h-11l-4 2 2-6v-20zM760 316l2 4M771 316l-2 4M798 316l2 4M809 316l-2 4" />
                <path d="M673 478h19l4 8-1 12-8 5h-11l-5-6-1-11zM671 482l-2 6 2 9h3M694 482l3 6-2 9h-3M674 497h18" />
            </g>
            <path stroke="#707070" d="M687 303H881V360H687zM755 310L732 354l6 1 6-3 3 7 7-44M814 310L837 354l-6 1-8 5-9-44" />
            <g stroke={INK.green}>
                <path d="M779 300h10v63h-10zM780 301h8v61h-8zM782 303h5v57h-5zM782 331h5M782 331l5-28M782 332l5 28" />
                <path d="M1014 387h24v59h-24zM1017 390h19v53h-19zM1017 416h19M1017 416l19-26M1017 416l19 27" />
                <path d="M695 458V482M664 482H743C752 482 758 476 758 468V458M636 615v12h9v-12" />
            </g>
            <path stroke={INK.gray} d="M835 445C836 424 852 408 877 408M901 445C902 428 915 414 936 413M1041 380C1043 360 1057 346 1077 345M1044 475C1046 455 1063 440 1085 440" />
            <path stroke="#fff" d="M780 463C780 488 798 506 820 507M1101 293V308" />
            <g stroke={INK.tan}>
                <path d="M1025 293V311" />
                <path d="M877 408h3v45h-3zM936 413h3v40h-3zM1077 345h3v39h-3zM1085 440h3v44h-3zM780 463h44v2h-44z" />
                <path d="M831 444h4v15h-4M883 444h-4v15h4M897 444h4v15h-4M943 444h-4v15h4M1038 380h3v9h-3M1084 380h-4v9h4M1039 477h4v15h-4M1091 477h-4v15h4M819 459v4h9v-4M819 510v-3h9v3" strokeWidth="2" />
                <path d="M882 615v4h15v-4zM882 617h15M882 697v-4h15v4M882 695h15" />
                <path d="M895 347h99M895 349h99" strokeWidth="2" />
                <path d="M951 458h73v32M951 459h72v31" />
                <path d="M951 460C982 462 1002 477 1023 490M951 461C978 465 1000 478 1022 490" />
                <path d="M896 324h6M896 322v4M902 323v3" />
                <circle cx="907" cy="324" r="3" fill={INK.tan} />
                <path d="M902 324h10M907 319v10M904 321l7 7M911 321l-7 7" />
                <path d="M968 398h26v47h-26z" />
                <path d="M1032 294h60v20l-5 6h-50l-5-6zM1033 295h58v18l-5 6h-48l-5-6zM1047 299h31v17h-31z" />
                <path d="M665 571H817M829 571H852V521M819 571V603" />
                <path d="M895 539h68v50h-68zM902 517h27v22h-27zM933 517h27v22h-27zM902 589h27v22h-27zM933 589h27v22h-27zM928 519v20M959 519v20" />
                <path d="M714 645H852M714 647H852V615M656 705H852M656 707H852M608 698h47v38h-47zM608 703h47M637 698v5M650 700h4v2h-4zM610 705h4v2h-4z" />
                <path d="M773 616h35v24h-35zM775 618h18v20h-18zM796 618h10v20h-10zM827 710v24M826 710v24" />
                <path d="M1152 404V292H1256V404zM1152 295H1256M1154 298h50v18h-50zM1206 298h49v18h-49z" />
                <path d="M1153 324C1170 318 1185 318 1204 316M1157 331C1172 321 1185 320 1200 317M1153 324l5 1-1 6" />
                <path d="M1123 295h27v27h-27zM1260 295h26v27h-26zM1312 292h22v185h-22zM1313 293h20v35h-20zM1313 330h20v103h-20zM1313 435h20v41h-20z" />
                <path d="M1172 472h60M1172 475h60M1172 471v5M1232 471v5M1173 493h61M1173 496h61M1173 491v7M1234 491v7" />
                <path d="M1141 489V510H1265V489M1142 509H1265M1144 498h8v10h-8zM1255 498h8v10h-8z" />
                <path d="M1119 607V588H1276V657M1119 647V657M1119 689V697H1276V689M1104 657h31v32h-31zM1260 657h32v32h-32z" />
                <Armchair />
                <g transform="translate(2396 0) scale(-1 1)"><Armchair /></g>
                <path d="M1140 649h11v-1h94v1h10v47h-115zM1151 649V684M1245 649V684M1182 648V684M1213 648V684M1151 679H1245M1140 684H1255" />
                <path d="M1308 682V610C1308 594 1330 594 1330 610V682M1307 682h62v15h-62zM1308 683h60v13h-60z" />
                <path d="M1028 645h16v52h-16zM1029 646h14v50h-14z" />
            </g>
            <g stroke={INK.gray}>
                <path d="M961 697h59v13h-59zM1174 596h47v31h-47zM1123 491H1247M1187 475l4 2h24l4-2" />
                <path d="M1191 476h22M1192 491h24" strokeWidth="2" />
                <path d="M1030 695L1043 647M1340 696L1367 684M1313 293l20 35M1333 293l-20 35M1313 435l20 41M1333 435l-20 41" />
                <path d="M970 409h22v25h-22zM971 410h20v23h-20zM973 412h16v19h-16zM986 421h5" />
                <circle cx="981" cy="422" r="1" fill={INK.gray} />
                <path d="M1045 297h35v21h-35zM1046 298v19M1079 298v19M1061 306h3v3h-3zM1060 302l3-5" />
                <path d="M683 615V647M714 615V647M607 645H714M607 647H714M841 598h16v5h-16zM842 600h14M848 598v5" />
                <path d="M772 615h37v26h-37zM794 616v24" />
                <circle cx="784" cy="622" r="2" />
                <circle cx="801" cy="622" r="2" />
                <path d="M788 710h40v23h-40zM789 718l7-7M790 723l12-12M800 732l22-20M812 732l14-15M820 732l7-8" strokeDasharray="2 1" stroke="#6a6a6a" />
                <path d="M905 519l3 2h16l3-2M936 519l3 2h16l3-2M904 609l4-2h16l4 2M935 609l4-2h16l4 2" />
                <path d="M1154 298l28 4 22 6M1160 312l20 2 24 2M1154 312l26 3M1206 298l24 1 24 8M1206 309l10 5 39 1M1146 499l4 8M1150 499l-4 8M1257 499l4 8M1261 499l-4 8" />
                <path d={coil(1108, 322, 358) + coil(1375, 567, 620)} />
                <circle cx="829" cy="737" r="3" fill="#666" />
            </g>
            <path stroke="#8a8078" d={speckle} />
            <g stroke={INK.tan}>
                <circle cx="797" cy="723" r="5" /><circle cx="797" cy="723" r="2" />
                <circle cx="817" cy="723" r="5" /><circle cx="817" cy="723" r="2" />
                <path d="M790 723h14M797 717v13M810 723h14M817 717v13" />
            </g>
            <Target x={1135} y={308} />
            <Target x={1272} y={308} />
            <Target x={1120} y={673} />
            <Target x={1276} y={673} />
            <g stroke={INK.red}>
                {[[987, 324], [1021, 317], [971, 385], [1096, 366], [746, 621]].map(([x, y]) => (
                    <circle key={x} cx={x} cy={y} r="3" />
                ))}
                <circle cx="971" cy="385" r="1" fill={INK.red} />
            </g>
            <g stroke="#fff">
                <circle cx="1019" cy="374" r="2" />
                <path d="M639 622h3l1 4h-5z" />
            </g>
            <path fill="#0000ff" d="M988 699l9 8h-4v18h-9v-18h-5z" />
        </>
    );
}

const blockTexts = [
    [982, 917, '项目名称'], [982, 934, '项目编号'], [982, 952, '设计单位'],
    [1110, 917, '项目地址'], [1110, 934, '图纸审核'], [1110, 952, '审核日期'],
    [1308, 934, '方案设计'], [1308, 952, '设计制图'], [1409, 917, '图'], [1446, 917, '号'],
    [1409, 952, '制图日期'], [1513, 917, '比'], [1548, 917, '例'], [1513, 934, '客户签字'],
];

const SheetTitle = styled.text`
    && { fill: #f4f43c; font-size: 24px; }
`;

const SheetScale = styled.text`
    && { fill: #f0f070; font-size: 12px; font-family: "Liberation Serif", serif; }
`;

const BlockText = styled.text`
    && { fill: #949494; font-size: 12px; }
`;

function TitleBlock() {
    return (
        <>
            <path stroke={INK.blue} d="M419 133V958H1618V133M782 901H1618M782 901V958" />
            <g stroke={INK.gray}>
                <path d="M422 901H782M422 901V956H667V901M475 928H667M789 909h179v42h-179z" />
                <circle cx="449" cy="929" r="25" />
                <path d="M977 901V957H1616V903H977M977 921H1616M977 939H1562M1031 903V957M1107 903V957M1161 903V957M1303 903V957M1356 903V957M1405 903V957M1458 903V957M1509 903V957M1562 903V957" />
            </g>
            <SheetTitle x="478" y="924">平面布置图</SheetTitle>
            <SheetScale x="478" y="941">SCALE:1:100</SheetScale>
            {blockTexts.map(([x, y, t]) => <BlockText key={`${x}-${y}`} x={x} y={y}>{t}</BlockText>)}
            <BlockText x="1579" y="917">1:100</BlockText>
        </>
    );
}

function Drawing() {
    return (
        <Sheet viewBox="31 133 1838 845" role="img" aria-label="平面布置图">
            <Dimensions />
            <Walls />
            <Furniture />
            <TitleBlock />
            <g stroke="#fff">
                <path d="M51 907V957H102M47 952h10v10H47z" />
                <path d="M1029 133V978M31 573H1869M1017 561h24v25h-24z" />
            </g>
            <text x="53" y="903" fontSize="18">Y</text>
            <text x="106" y="956" fontSize="18">X</text>
            <text x="34" y="151" fontSize="13">[−][俯视][二维线框]</text>
        </Sheet>
    );
}

/* ---------- work area ---------- */

const Main = styled.main`
    display: flex;
    flex: 1;
    min-height: 0;
`;

const Dock = styled.aside`
    flex: none;
    display: flex;
    flex-direction: column;
    align-items: flex-start;
    gap: 2px;
    width: ${({ $right }) => ($right ? 32 : 30)}px;
    padding-left: ${({ $right }) => ($right ? 4 : 0)}px;
`;

const SideBar = styled.div`
    display: flex;
    flex-direction: column;
    align-items: center;
    width: 24px;
    border: 1px solid #3a3a3a;
    border-top: 0;
    background: #f0f0f0;

    hr { width: 18px; margin: 2px 0; border: 0; border-top: 1px solid #a0a0a0; }
`;

const SideGrip = styled.span`
    align-self: stretch;
    height: 9px;
    background: radial-gradient(circle at 1px 1px, #888 1px, transparent 1px) 3px 2px / 3px 3px #444;
`;

const drawTools = ['line', 'xline', 'pline', 'polygon', 'rect', 'arc', 'circle', 'cloud', 'spline', 'ellipse', 'ellipseArc', 'insert', 'makeBlock', 'point', 'hatch', 'gradient', 'region', 'table'];
const editTools = ['erase', 'copyObj', 'mirror', 'offset', 'array', 'move', 'rotate', 'scale', 'stretch', 'trim', 'extend', 'breakPt', 'breakObj', 'join', 'chamfer', 'fillet', 'blend', 'explode'];

const SideTool = styled(IconButton)`
    width: 22px;
    font-size: 17px;
    font-weight: 400;
`;

const SideTools = ({ names }) =>
    names.map((n) => <SideTool key={n} aria-label={n}><Icon name={n} size={17} /></SideTool>);

const Frame = styled.section`
    display: grid;
    flex: 1;
    min-width: 0;
    grid-template-columns: minmax(0, 1fr) 18px;
    grid-template-rows: minmax(0, 1fr) 17px;
    margin-bottom: 5px;
    border: solid #a4a4a4;
    border-width: 2px 1px 0 1px;
    border-right-color: #fff;
`;

const CanvasCell = styled.div`
    min-height: 0;
`;

const VScroll = styled.div`
    display: flex;
    flex-direction: column;
    justify-content: space-between;
    background: #f0f0f0;
`;

const ScrollButton = styled.button`
    display: flex;
    align-items: center;
    justify-content: center;
    width: 17px;
    height: 17px;
`;

const VTrack = styled.div`
    display: flex;
    flex: 1;
    align-items: flex-end;
    justify-content: center;
`;

const Thumb = styled.div`
    width: 16px;
    height: 16px;
    background: #cdcdcd;
`;

const LayoutBar = styled.div`
    grid-column: 1 / 3;
    display: flex;
    align-items: stretch;
    background: #f0f0f0;
    border-bottom: 1px solid #fff;
`;

const NavButton = styled.button`
    display: flex;
    align-items: center;
    justify-content: center;
    width: 14px;
    border-right: 1px solid #999;
`;

const LayoutTab = styled.button`
    width: ${({ $on }) => ($on ? 46 : 48)}px;
    height: 15px;
    line-height: 15px;
    margin-right: -2px;
    ${({ $on }) => ($on
        ? css`
            background: #000;
            color: #fff;
            clip-path: polygon(0 0, 100% 0, 88% 100%, 10% 100%);
        `
        : css`
            padding-right: 6px;
            background: linear-gradient(110deg, transparent 39px, #666 39px, #666 40px, transparent 40px);
        `)}
`;

const HScroll = styled.div`
    display: flex;
    align-items: center;
    width: 643px;
    margin-left: auto;
    padding-right: 18px;
    border-left: 5px solid #cdcdcd;
`;

const HTrack = styled.div`
    flex: 1;
    padding-left: 222px;
`;

const navShapes = ['M2 1v8M9 1L4 5l5 4z', 'M8 1L3 5l5 4z', 'M2 1l5 4-5 4z', 'M8 1v8M1 1l5 4-5 4z'];

function Workspace() {
    return (
        <Main>
            <Dock>
                <SideBar>
                    <SideGrip />
                    <SideTools names={drawTools} />
                    <SideTool aria-label="多行文字">A</SideTool>
                    <SideTools names={['addSel']} />
                </SideBar>
            </Dock>
            <Frame>
                <CanvasCell><Drawing /></CanvasCell>
                <VScroll>
                    <ScrollButton aria-label="向上滚动"><Chevron dir="up" heavy /></ScrollButton>
                    <VTrack><Thumb /></VTrack>
                    <ScrollButton aria-label="向下滚动"><Chevron heavy /></ScrollButton>
                </VScroll>
                <LayoutBar>
                    {navShapes.map((d) => (
                        <NavButton key={d} aria-label="切换布局">
                            <Glyph viewBox="0 0 10 10" width="10" height="10"><path d={d} fill="#555" stroke="#555" /></Glyph>
                        </NavButton>
                    ))}
                    <LayoutTab $on>模型</LayoutTab>
                    <LayoutTab>布局1</LayoutTab>
                    <HScroll>
                        <ScrollButton aria-label="向左滚动"><Chevron dir="left" heavy /></ScrollButton>
                        <HTrack><Thumb /></HTrack>
                        <ScrollButton aria-label="向右滚动"><Chevron dir="right" heavy /></ScrollButton>
                    </HScroll>
                </LayoutBar>
            </Frame>
            <Dock $right>
                <SideBar>
                    <SideGrip />
                    <SideTools names={editTools} />
                </SideBar>
                <SideBar>
                    <SideGrip />
                    <SideTools names={['front', 'back', 'above', 'under']} />
                    <hr />
                    <SideTools names={['annoFront', 'hatchBack']} />
                </SideBar>
            </Dock>
        </Main>
    );
}

/* ---------- command line and status ---------- */

const Command = styled.section`
    display: grid;
    grid-template-columns: 23px 1fr;
    height: 57px;
    margin-right: 1px;
    font-family: "Liberation Mono", "Noto Sans CJK SC", monospace;
`;

const CommandSide = styled.div`
    display: flex;
    flex-direction: column;
    align-items: center;
    justify-content: space-between;
    padding: 3px 0 4px;
    background: linear-gradient(#8a8a8a, #4a4a4a);
`;

const CommandGrip = styled.span`
    width: 18px;
    height: 6px;
    background: radial-gradient(circle at 1px 1px, #ccc 1px, transparent 1px) 0 0 / 3px 3px;
`;

const History = styled.div`
    height: 34px;
    padding: 0 2px;
    border-top: 1px solid #888;
    border-bottom: 1px solid #777;
    background: #c8c8c8;
    font-size: 12px;
    line-height: 16px;
`;

const CommandInput = styled.div`
    display: flex;
    align-items: center;
    gap: 2px;
    height: 23px;
    padding-left: 5px;
    background: #fff;

    input {
        flex: 1;
        padding-left: 2px;
        font-size: 13px;
    }
    input::placeholder { color: #a0a0a0; font-style: italic; opacity: 1; }
`;

const Status = styled.footer`
    display: flex;
    height: 23px;
    border-top: 2px solid #222;
    background: linear-gradient(#a6a6a6, #7c7c7c);
`;

const Coords = styled.output`
    width: 217px;
    padding-left: 12px;
    font-family: "Liberation Mono", monospace;
    font-size: 10px;
    line-height: 22px;
    white-space: pre;
`;

const StatusButton = styled.button`
    display: flex;
    align-items: center;
    justify-content: center;
    gap: 3px;
    width: ${({ $w = 22 }) => $w}px;
    height: 21px;
    border-left: 1px solid #888;
    border-right: 1px solid #777;
    background: ${({ $on }) => ($on ? 'linear-gradient(#e4f4fa, #a4d4e6)' : 'linear-gradient(#d2d2d2, #b2b2b2)')};
`;

const Gap = styled.span`
    width: ${({ $w }) => $w}px;
    ${({ $grow }) => $grow && 'flex: 1;'}
`;

const Tray = styled.div`
    display: flex;
    align-items: center;
    gap: 4px;
    width: 51px;
    margin: 1px 0 1px 2px;
    padding-left: 3px;
    border: 1px solid #555;
    border-right: 0;
    background: #b4b4b4;
`;

const toggles = [
    ['infer'], ['snap'], ['grid'], ['ortho'], ['polar'], ['osnap', true], ['osnap3d'], ['otrack', true],
    ['ducs'], ['dyn', true], ['lwt'], ['tpy', true], ['qp'], ['cycle'], ['annoMon'],
];

function Footer() {
    return (
        <>
            <Command>
                <CommandSide>
                    <CommandGrip />
                    <Glyph viewBox="0 0 12 12" width="12" height="12"><path d="M2 2l8 8M10 2l-8 8" stroke="#eee" strokeWidth="2" /></Glyph>
                    <Glyph viewBox="0 0 14 14" width="14" height="14">
                        <path d="M5 5l7 7" stroke="#fff" strokeWidth="3" />
                        <path d="M2 5c1 3 5 2 5-1 0-1-1-2-2-3v3H3" stroke="#fff" strokeWidth="2" />
                    </Glyph>
                </CommandSide>
                <div>
                    <History>
                        <div>命令:</div>
                        <div>命令: _qsave</div>
                    </History>
                    <CommandInput>
                        <Glyph viewBox="0 0 15 15" width="15" height="15">
                            <path d="M0 0h15v15H0z" fill="#dcdce0" stroke="#999" />
                            <path d="M3 4l3 3-3 3M7 11h5" />
                        </Glyph>
                        <Icon name="caret" size={12} />
                        <input type="text" aria-label="命令" placeholder="键入命令" />
                    </CommandInput>
                </div>
            </Command>
            <Status>
                <Coords>-11600.9446, 6937.2683 , 0.0000</Coords>
                {toggles.map(([name, on]) => (
                    <StatusButton key={name} $on={on} aria-pressed={!!on} aria-label={name}><Icon name={name} size={17} /></StatusButton>
                ))}
                <Gap $grow />
                <StatusButton $w={29}>模型</StatusButton>
                <StatusButton $w={22} aria-label="布局"><Icon name="layoutA" size={17} /></StatusButton>
                <StatusButton $w={22} aria-label="快速查看布局"><Icon name="layoutB" size={17} /></StatusButton>
                <Gap $w={18} />
                <StatusButton $w={54}><Icon name="anno" size={16} />1:1<Icon name="caret" size={14} /></StatusButton>
                <StatusButton aria-label="注释可见性"><Icon name="annoOn" size={17} /></StatusButton>
                <StatusButton aria-label="自动缩放"><Icon name="annoAuto" size={17} /></StatusButton>
                <Gap $w={6} />
                <StatusButton aria-label="切换工作空间"><Icon name="gear" size={17} /></StatusButton>
                <StatusButton aria-label="锁定"><Icon name="lock" size={17} /></StatusButton>
                <StatusButton aria-label="隔离对象"><Icon name="isolate" size={17} /></StatusButton>
                <Tray><Icon name="trayFile" size={17} /><Icon name="bulb" size={17} /></Tray>
                <StatusButton $w={11} aria-label="状态栏菜单"><Icon name="caret" size={14} /></StatusButton>
                <StatusButton $w={23} aria-label="全屏显示"><Icon name="clean" size={17} /></StatusButton>
            </Status>
        </>
    );
}

function App() {
    return (
        <Page>
            <GlobalStyle />
            <TopHeader />
            <TabBar>
                <FileTab>
                    <span>平面布置图*</span>
                    <button aria-label="关闭标签">
                        <Glyph viewBox="0 0 10 10" width="8" height="8"><path d="M1 1l8 8M9 1L1 9" stroke="#8a8a8a" strokeWidth="2" /></Glyph>
                    </button>
                </FileTab>
                <NewTab aria-label="新建图形">+</NewTab>
            </TabBar>
            <Toolbars />
            <Workspace />
            <Footer />
        </Page>
    );
}

export default App;
